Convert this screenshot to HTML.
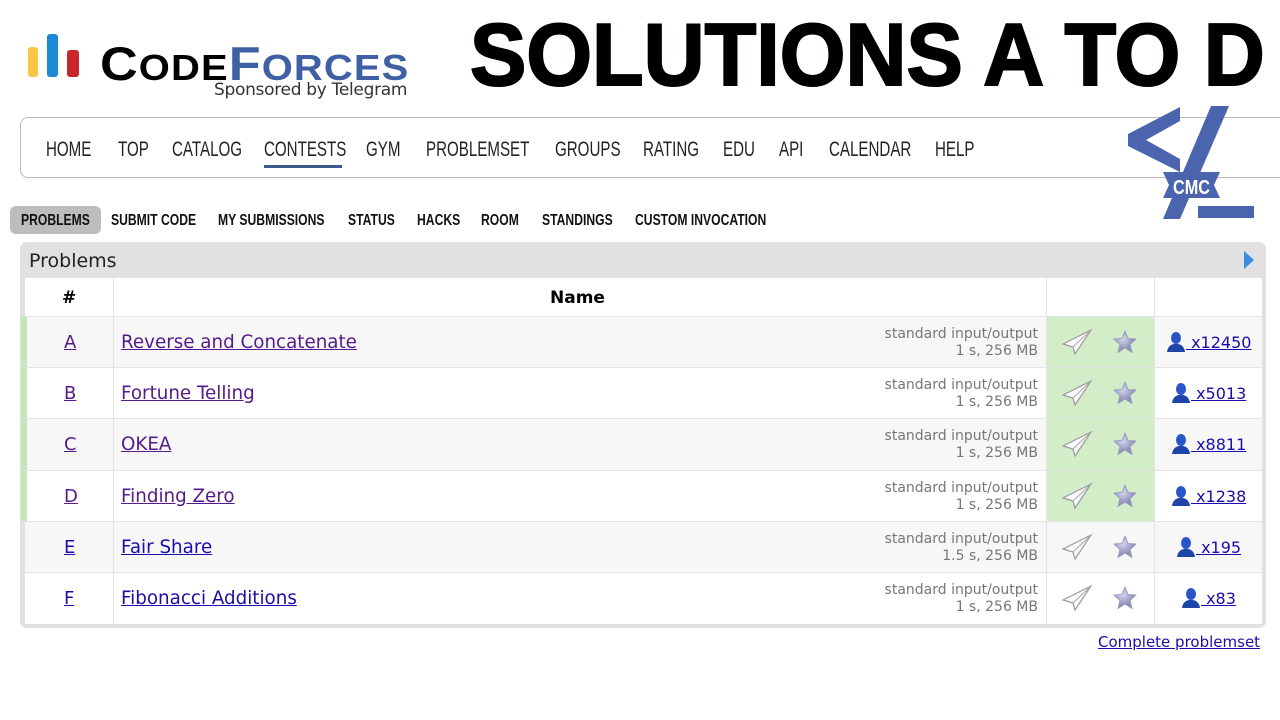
<!DOCTYPE html>
<html><head><meta charset="utf-8"><style>
*{margin:0;padding:0;box-sizing:border-box}
body{width:1280px;height:720px;background:#fff;position:relative;overflow:hidden;font-family:"DejaVu Sans",Verdana,sans-serif}
.a{position:absolute;white-space:nowrap}
.nav{font-family:"Liberation Sans",sans-serif;font-size:21px;color:#222;top:138px;transform:scaleX(0.72);transform-origin:0 0}
.tab{font-family:"Liberation Sans",sans-serif;font-weight:bold;font-size:16px;color:#111;top:212px;transform:scaleX(0.76);transform-origin:0 0}
.row{position:absolute;left:25px;width:1237px;height:51px;border-top:1px solid #e4e4e4}
.g{background:#f7f7f7}
.cell{position:absolute;top:0;height:100%}
.lim{position:absolute;right:224px;top:9px;text-align:right;font-size:14px;color:#777;line-height:17px}
</style></head><body>
<div class="a" style="left:28px;top:47px;width:10px;height:30px;background:#f6c844;border-radius:3px"></div>
<div class="a" style="left:47px;top:34px;width:11px;height:43px;background:#1a8ad4;border-radius:3px"></div>
<div class="a" style="left:67px;top:50px;width:12px;height:27px;background:#c8272c;border-radius:3px"></div>
<div class="a" style="left:100px;top:36px;font-family:'Liberation Sans',sans-serif;font-weight:bold;letter-spacing:1px;transform:scaleX(1.11);transform-origin:0 0"><span style="font-size:47px">C</span><span style="font-size:36px">ODE</span><span style="font-size:47px;color:#3f60a4">F</span><span style="font-size:36px;color:#3f60a4">ORCES</span></div>
<div class="a" style="left:214px;top:80px;font-size:17px;color:#333;font-family:'DejaVu Sans',sans-serif;letter-spacing:-0.3px">Sponsored by Telegram</div>
<div class="a" style="left:470px;top:4px;font-family:'Liberation Sans',sans-serif;font-weight:bold;font-size:88px;color:#000;transform:scaleX(0.96);transform-origin:0 0;text-shadow:-1px 0 #e0f,1px 0 #0ee,0 0 1px #000;-webkit-text-stroke:2px #000">SOLUTIONS A TO D</div>
<div class="a" style="left:20px;top:117px;width:1290px;height:61px;border:1px solid #bbb;border-radius:8px"></div>
<div class="a nav" style="left:46px">HOME</div>
<div class="a nav" style="left:118px">TOP</div>
<div class="a nav" style="left:172px">CATALOG</div>
<div class="a nav" style="left:264px">CONTESTS</div>
<div class="a" style="left:264px;top:165px;width:78px;height:3px;background:#3b5a8e"></div>
<div class="a nav" style="left:366px">GYM</div>
<div class="a nav" style="left:426px">PROBLEMSET</div>
<div class="a nav" style="left:555px">GROUPS</div>
<div class="a nav" style="left:643px">RATING</div>
<div class="a nav" style="left:723px">EDU</div>
<div class="a nav" style="left:779px">API</div>
<div class="a nav" style="left:829px">CALENDAR</div>
<div class="a nav" style="left:935px">HELP</div>
<svg class="a" style="left:0;top:0" width="1280" height="240">
<g fill="#4a64ae">
<polygon points="1180,107 1180,121 1146,140 1180,159 1180,172 1128,146 1128,134"/>
<polygon points="1211,106 1229,106 1180,219 1163,219"/>
<rect x="1198" y="206" width="56" height="12"/>
<polygon points="1163,172 1220,172 1214,185 1220,198 1163,198 1169,185"/>
</g>
<text x="1173" y="194" fill="#fff" font-family="Liberation Sans,sans-serif" font-weight="bold" font-size="20" textLength="37" lengthAdjust="spacingAndGlyphs">CMC</text>
</svg>
<div class="a" style="left:10px;top:206px;width:91px;height:28px;background:#bdbdbd;border-radius:6px"></div>
<div class="a tab" style="left:21px">PROBLEMS</div>
<div class="a tab" style="left:111px">SUBMIT CODE</div>
<div class="a tab" style="left:218px">MY SUBMISSIONS</div>
<div class="a tab" style="left:348px">STATUS</div>
<div class="a tab" style="left:417px">HACKS</div>
<div class="a tab" style="left:481px">ROOM</div>
<div class="a tab" style="left:542px">STANDINGS</div>
<div class="a tab" style="left:635px">CUSTOM INVOCATION</div>
<div class="a" style="left:20px;top:242px;width:1246px;height:386px;background:#e1e1e1;border-radius:7px"></div>
<div class="a" style="left:29px;top:250px;font-size:19px;color:#222">Problems</div>
<svg class="a" style="left:1243px;top:251px" width="12" height="18"><polygon points="1,0 11,9 1,18" fill="#3a8ee0"/></svg>
<div class="a" style="left:25px;top:278px;width:1237px;height:346px;background:#fff;border-radius:6px 6px 0 0"></div>
<div class="row" style="top:278px;height:38px;border-top:none;background:#fff">
<div class="a" style="left:37px;top:10px;font-weight:bold;font-size:17px">#</div>
<div class="a" style="left:525px;top:10px;font-weight:bold;font-size:17px">Name</div>
</div>
<div id="rows"></div>
<div class="a" style="left:113px;top:278px;width:1px;height:346px;background:#e4e4e4"></div>
<div class="a" style="left:1046px;top:278px;width:1px;height:346px;background:#e4e4e4"></div>
<div class="a" style="left:1154px;top:278px;width:1px;height:346px;background:#e4e4e4"></div>
<div class="a" style="left:1098px;top:633px;font-size:15px;color:#1a0dab;text-decoration:underline">Complete problemset</div>
<script>
var d=[["A","Reverse and Concatenate","1 s, 256 MB","x12450",1,1],["B","Fortune Telling","1 s, 256 MB","x5013",1,0],["C","OKEA","1 s, 256 MB","x8811",1,1],["D","Finding Zero","1 s, 256 MB","x1238",1,0],["E","Fair Share","1.5 s, 256 MB","x195",0,1],["F","Fibonacci Additions","1 s, 256 MB","x83",0,0]];
var tops=[316,367,418,470,521,572],h="";
var plane='<svg width="32" height="28" viewBox="0 0 32 28"><polygon points="2,16 30,2 14,26 12,19" fill="#fafafa" stroke="#999" stroke-width="1.2"/><polyline points="12,19 30,2" fill="none" stroke="#aaa"/></svg>';
var star='<svg width="26" height="26" viewBox="0 0 26 26"><defs><radialGradient id="sg" cx="40%" cy="35%"><stop offset="0" stop-color="#d6d8ef"/><stop offset="1" stop-color="#8e90b8"/></radialGradient></defs><polygon points="13,2 16,9.5 24,10 18,15.5 20,23.5 13,19 6,23.5 8,15.5 2,10 10,9.5" fill="url(#sg)" stroke="#9a9cc0" stroke-linejoin="round"/></svg>';
var user='<svg width="20" height="22" viewBox="0 0 20 22"><ellipse cx="10" cy="7" rx="5" ry="6" fill="#2a55c8"/><path d="M1,21 Q2,14 8,13 L12,13 Q18,14 19,21 Z" fill="#1d44a8"/></svg>';
d.forEach(function(r,i){
var c=r[4]?'#551a8b':'#1a0dab';
h+='<div class="row'+(r[5]?' g':'')+'" style="top:'+tops[i]+'px;height:'+((tops[i+1]||624)-tops[i])+'px">';
if(r[4])h+='<div class="cell" style="left:-4px;width:6px;background:#c4e5b8"></div><div class="cell" style="left:1021px;width:108px;background:#d4edc9"></div>';
h+='<div class="a" style="left:39px;top:15px;font-size:18px;color:'+c+';text-decoration:underline">'+r[0]+'</div>';
h+='<div class="a" style="left:96px;top:15px;font-size:18.3px;color:'+c+';text-decoration:underline">'+r[1]+'</div>';
h+='<div class="lim">standard input/output<br>'+r[2]+'</div>';
h+='<div class="a" style="left:1036px;top:11px">'+plane+'</div><div class="a" style="left:1087px;top:12px">'+star+'</div>';
h+='<div class="a" style="left:'+(1141+(6-r[3].length)*5)+'px;top:14px;font-size:16px;color:#1a0dab;text-decoration:underline;display:flex;align-items:center">'+user+'&nbsp;'+r[3]+'</div>';
h+='</div>';});
document.getElementById('rows').outerHTML=h;
</script>
</body></html>
